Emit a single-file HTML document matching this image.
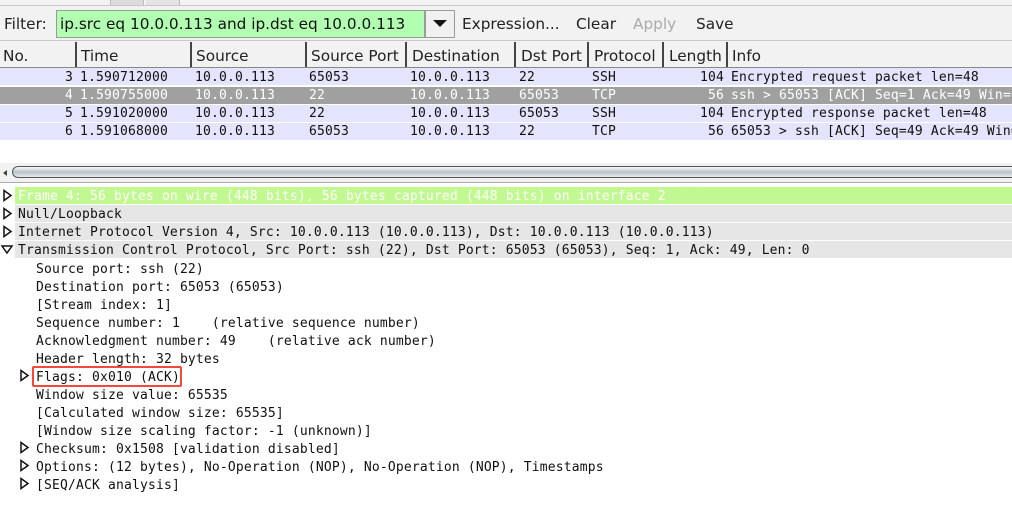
<!DOCTYPE html>
<html><head><style>
*{margin:0;padding:0;box-sizing:border-box}
body{width:1012px;height:521px;background:#fff;position:relative;overflow:hidden;font-family:"DejaVu Sans","Liberation Sans",sans-serif;}
.a{position:absolute;white-space:pre}
.m{font-family:"DejaVu Sans Mono","Liberation Mono",monospace;font-size:13px;letter-spacing:0.17px}
.s{font-size:15.3px}
.tri{position:absolute;width:0;height:0}
svg{position:absolute}
</style></head><body>
<div class="a" style="left:0;top:0;width:1012px;height:42px;background:#f2f2f2"></div>
<div class="a" style="left:0;top:5px;width:1012px;height:1px;background:#c8c8c8"></div>
<div class="a" style="left:110px;top:0;width:34px;height:5px;background:#dcdcdc;border-left:1px solid #bbb;border-right:1px solid #bbb"></div>
<div class="a" style="left:146px;top:0;width:34px;height:5px;background:#e4e4e4;border-right:1px solid #bbb"></div>
<div class="a s" style="left:4px;top:15px;color:#222">Filter:</div>
<div class="a" style="left:56px;top:10px;width:369px;height:28px;background:#b2ffb2;border:1px solid #9a9a9a"></div>
<div class="a s" style="left:60px;top:15px;color:#111">ip.src eq 10.0.0.113 and ip.dst eq 10.0.0.113</div>
<div class="a" style="left:425px;top:10px;width:30px;height:28px;background:#f0f0f0;border:1px solid #9a9a9a"></div>
<div class="tri" style="left:433px;top:20px;border-left:7px solid transparent;border-right:7px solid transparent;border-top:7px solid #111"></div>
<div class="a s" style="left:462px;top:15px;color:#222">Expression...</div>
<div class="a s" style="left:576px;top:15px;color:#222">Clear</div>
<div class="a s" style="left:633px;top:15px;color:#aaa">Apply</div>
<div class="a s" style="left:696px;top:15px;color:#222">Save</div>
<div class="a" style="left:0;top:40px;width:1012px;height:1px;background:#c8c8c8"></div>
<!-- header -->
<div class="a" style="left:0;top:42px;width:1012px;height:26px;background:#f2f2f2;border-bottom:1px solid #888"></div>
<div class="a s" style="left:3px;top:47px;color:#222">No.</div>
<div class="a" style="left:75px;top:42px;width:2px;height:25px;background:#444"></div>
<div class="a s" style="left:81px;top:47px;color:#222">Time</div>
<div class="a" style="left:190px;top:42px;width:2px;height:25px;background:#444"></div>
<div class="a s" style="left:196px;top:47px;color:#222">Source</div>
<div class="a" style="left:305px;top:42px;width:2px;height:25px;background:#444"></div>
<div class="a s" style="left:311px;top:47px;color:#222">Source Port</div>
<div class="a" style="left:405px;top:42px;width:2px;height:25px;background:#444"></div>
<div class="a s" style="left:412px;top:47px;color:#222">Destination</div>
<div class="a" style="left:514px;top:42px;width:2px;height:25px;background:#444"></div>
<div class="a s" style="left:521px;top:47px;color:#222">Dst Port</div>
<div class="a" style="left:587px;top:42px;width:2px;height:25px;background:#444"></div>
<div class="a s" style="left:594px;top:47px;color:#222">Protocol</div>
<div class="a" style="left:662px;top:42px;width:2px;height:25px;background:#444"></div>
<div class="a s" style="left:669px;top:47px;color:#222">Length</div>
<div class="a" style="left:726px;top:42px;width:2px;height:25px;background:#444"></div>
<div class="a s" style="left:732px;top:47px;color:#222">Info</div>
<!-- rows -->
<div class="a" style="left:0;top:68px;width:1012px;height:17px;background:#e4e4fc"></div>
<div class="a" style="left:0;top:87px;width:1012px;height:17px;background:#a0a0a0"></div>
<div class="a" style="left:0;top:105px;width:1012px;height:17px;background:#e4e4fc"></div>
<div class="a" style="left:0;top:123px;width:1012px;height:17px;background:#e4e4fc"></div>

<div class="a m" style="left:65px;top:70px;color:#111">3</div>
<div class="a m" style="left:80px;top:70px;color:#111">1.590712000</div>
<div class="a m" style="left:195px;top:70px;color:#111">10.0.0.113</div>
<div class="a m" style="left:309px;top:70px;color:#111">65053</div>
<div class="a m" style="left:410px;top:70px;color:#111">10.0.0.113</div>
<div class="a m" style="left:519px;top:70px;color:#111">22</div>
<div class="a m" style="left:592px;top:70px;color:#111">SSH</div>
<div class="a m" style="left:700px;top:70px;color:#111">104</div>
<div class="a m" style="left:731px;top:70px;color:#111">Encrypted request packet len=48</div>

<div class="a m" style="left:65px;top:88px;color:#fff">4</div>
<div class="a m" style="left:80px;top:88px;color:#fff">1.590755000</div>
<div class="a m" style="left:195px;top:88px;color:#fff">10.0.0.113</div>
<div class="a m" style="left:309px;top:88px;color:#fff">22</div>
<div class="a m" style="left:410px;top:88px;color:#fff">10.0.0.113</div>
<div class="a m" style="left:519px;top:88px;color:#fff">65053</div>
<div class="a m" style="left:592px;top:88px;color:#fff">TCP</div>
<div class="a m" style="left:708px;top:88px;color:#fff">56</div>
<div class="a m" style="left:731px;top:88px;color:#fff">ssh &gt; 65053 [ACK] Seq=1 Ack=49 Win=6</div>

<div class="a m" style="left:65px;top:106px;color:#111">5</div>
<div class="a m" style="left:80px;top:106px;color:#111">1.591020000</div>
<div class="a m" style="left:195px;top:106px;color:#111">10.0.0.113</div>
<div class="a m" style="left:309px;top:106px;color:#111">22</div>
<div class="a m" style="left:410px;top:106px;color:#111">10.0.0.113</div>
<div class="a m" style="left:519px;top:106px;color:#111">65053</div>
<div class="a m" style="left:592px;top:106px;color:#111">SSH</div>
<div class="a m" style="left:700px;top:106px;color:#111">104</div>
<div class="a m" style="left:731px;top:106px;color:#111">Encrypted response packet len=48</div>

<div class="a m" style="left:65px;top:124px;color:#111">6</div>
<div class="a m" style="left:80px;top:124px;color:#111">1.591068000</div>
<div class="a m" style="left:195px;top:124px;color:#111">10.0.0.113</div>
<div class="a m" style="left:309px;top:124px;color:#111">65053</div>
<div class="a m" style="left:410px;top:124px;color:#111">10.0.0.113</div>
<div class="a m" style="left:519px;top:124px;color:#111">22</div>
<div class="a m" style="left:592px;top:124px;color:#111">TCP</div>
<div class="a m" style="left:708px;top:124px;color:#111">56</div>
<div class="a m" style="left:731px;top:124px;color:#111">65053 &gt; ssh [ACK] Seq=49 Ack=49 Win=</div>
<!-- scrollbar -->
<div class="a" style="left:0;top:163px;width:1012px;height:20px;background:#f2f2f2;border-bottom:1px solid #aaa"></div>
<div class="tri" style="left:3px;top:170px;border-top:3px solid transparent;border-bottom:3px solid transparent;border-right:4px solid #444"></div>
<div class="a" style="left:12px;top:166px;width:1010px;height:12px;border:1px solid #555;border-radius:6px;background:linear-gradient(#fafafa,#b8c4cc 50%,#e8ecef)"></div>
<div class="a" style="left:680px;top:181px;color:#333;font-size:9px">.......</div>
<!-- details -->
<div class="a" style="left:15px;top:187px;width:997px;height:17px;background:#c2f890"></div>
<div class="a" style="left:15px;top:205px;width:997px;height:17px;background:#e6e6e6"></div>
<div class="a" style="left:15px;top:223px;width:997px;height:17px;background:#e6e6e6"></div>
<div class="a" style="left:15px;top:241px;width:997px;height:17px;background:#e6e6e6"></div>
<svg width="14" height="14" style="left:2px;top:189px"><path d="M2 1.5 L9 6.5 L2 11.5 Z" fill="none" stroke="#111" stroke-width="1.5"/></svg>
<svg width="14" height="14" style="left:2px;top:207px"><path d="M2 1.5 L9 6.5 L2 11.5 Z" fill="none" stroke="#111" stroke-width="1.5"/></svg>
<svg width="14" height="14" style="left:2px;top:225px"><path d="M2 1.5 L9 6.5 L2 11.5 Z" fill="none" stroke="#111" stroke-width="1.5"/></svg>
<svg width="14" height="14" style="left:1px;top:244px"><path d="M1 2 L11 2 L6 9 Z" fill="none" stroke="#111" stroke-width="1.5"/></svg>
<div class="a m" style="left:18px;top:189px;color:#fff">Frame 4: 56 bytes on wire (448 bits), 56 bytes captured (448 bits) on interface 2</div>
<div class="a m" style="left:18px;top:207px;color:#111">Null/Loopback</div>
<div class="a m" style="left:18px;top:225px;color:#111">Internet Protocol Version 4, Src: 10.0.0.113 (10.0.0.113), Dst: 10.0.0.113 (10.0.0.113)</div>
<div class="a m" style="left:18px;top:243px;color:#111">Transmission Control Protocol, Src Port: ssh (22), Dst Port: 65053 (65053), Seq: 1, Ack: 49, Len: 0</div>
<div class="a m" style="left:36px;top:261px;color:#111;line-height:18px">Source port: ssh (22)
Destination port: 65053 (65053)
[Stream index: 1]
Sequence number: 1    (relative sequence number)
Acknowledgment number: 49    (relative ack number)
Header length: 32 bytes
Flags: 0x010 (ACK)
Window size value: 65535
[Calculated window size: 65535]
[Window size scaling factor: -1 (unknown)]
Checksum: 0x1508 [validation disabled]
Options: (12 bytes), No-Operation (NOP), No-Operation (NOP), Timestamps
[SEQ/ACK analysis]</div>
<svg width="14" height="14" style="left:19px;top:369px"><path d="M2 1.5 L9 6.5 L2 11.5 Z" fill="none" stroke="#111" stroke-width="1.5"/></svg>
<svg width="14" height="14" style="left:19px;top:441px"><path d="M2 1.5 L9 6.5 L2 11.5 Z" fill="none" stroke="#111" stroke-width="1.5"/></svg>
<svg width="14" height="14" style="left:19px;top:459px"><path d="M2 1.5 L9 6.5 L2 11.5 Z" fill="none" stroke="#111" stroke-width="1.5"/></svg>
<svg width="14" height="14" style="left:19px;top:477px"><path d="M2 1.5 L9 6.5 L2 11.5 Z" fill="none" stroke="#111" stroke-width="1.5"/></svg>
<div class="a" style="left:32px;top:366px;width:150px;height:21px;border:2px solid #f04a3a;border-radius:2px"></div>
</body></html>
